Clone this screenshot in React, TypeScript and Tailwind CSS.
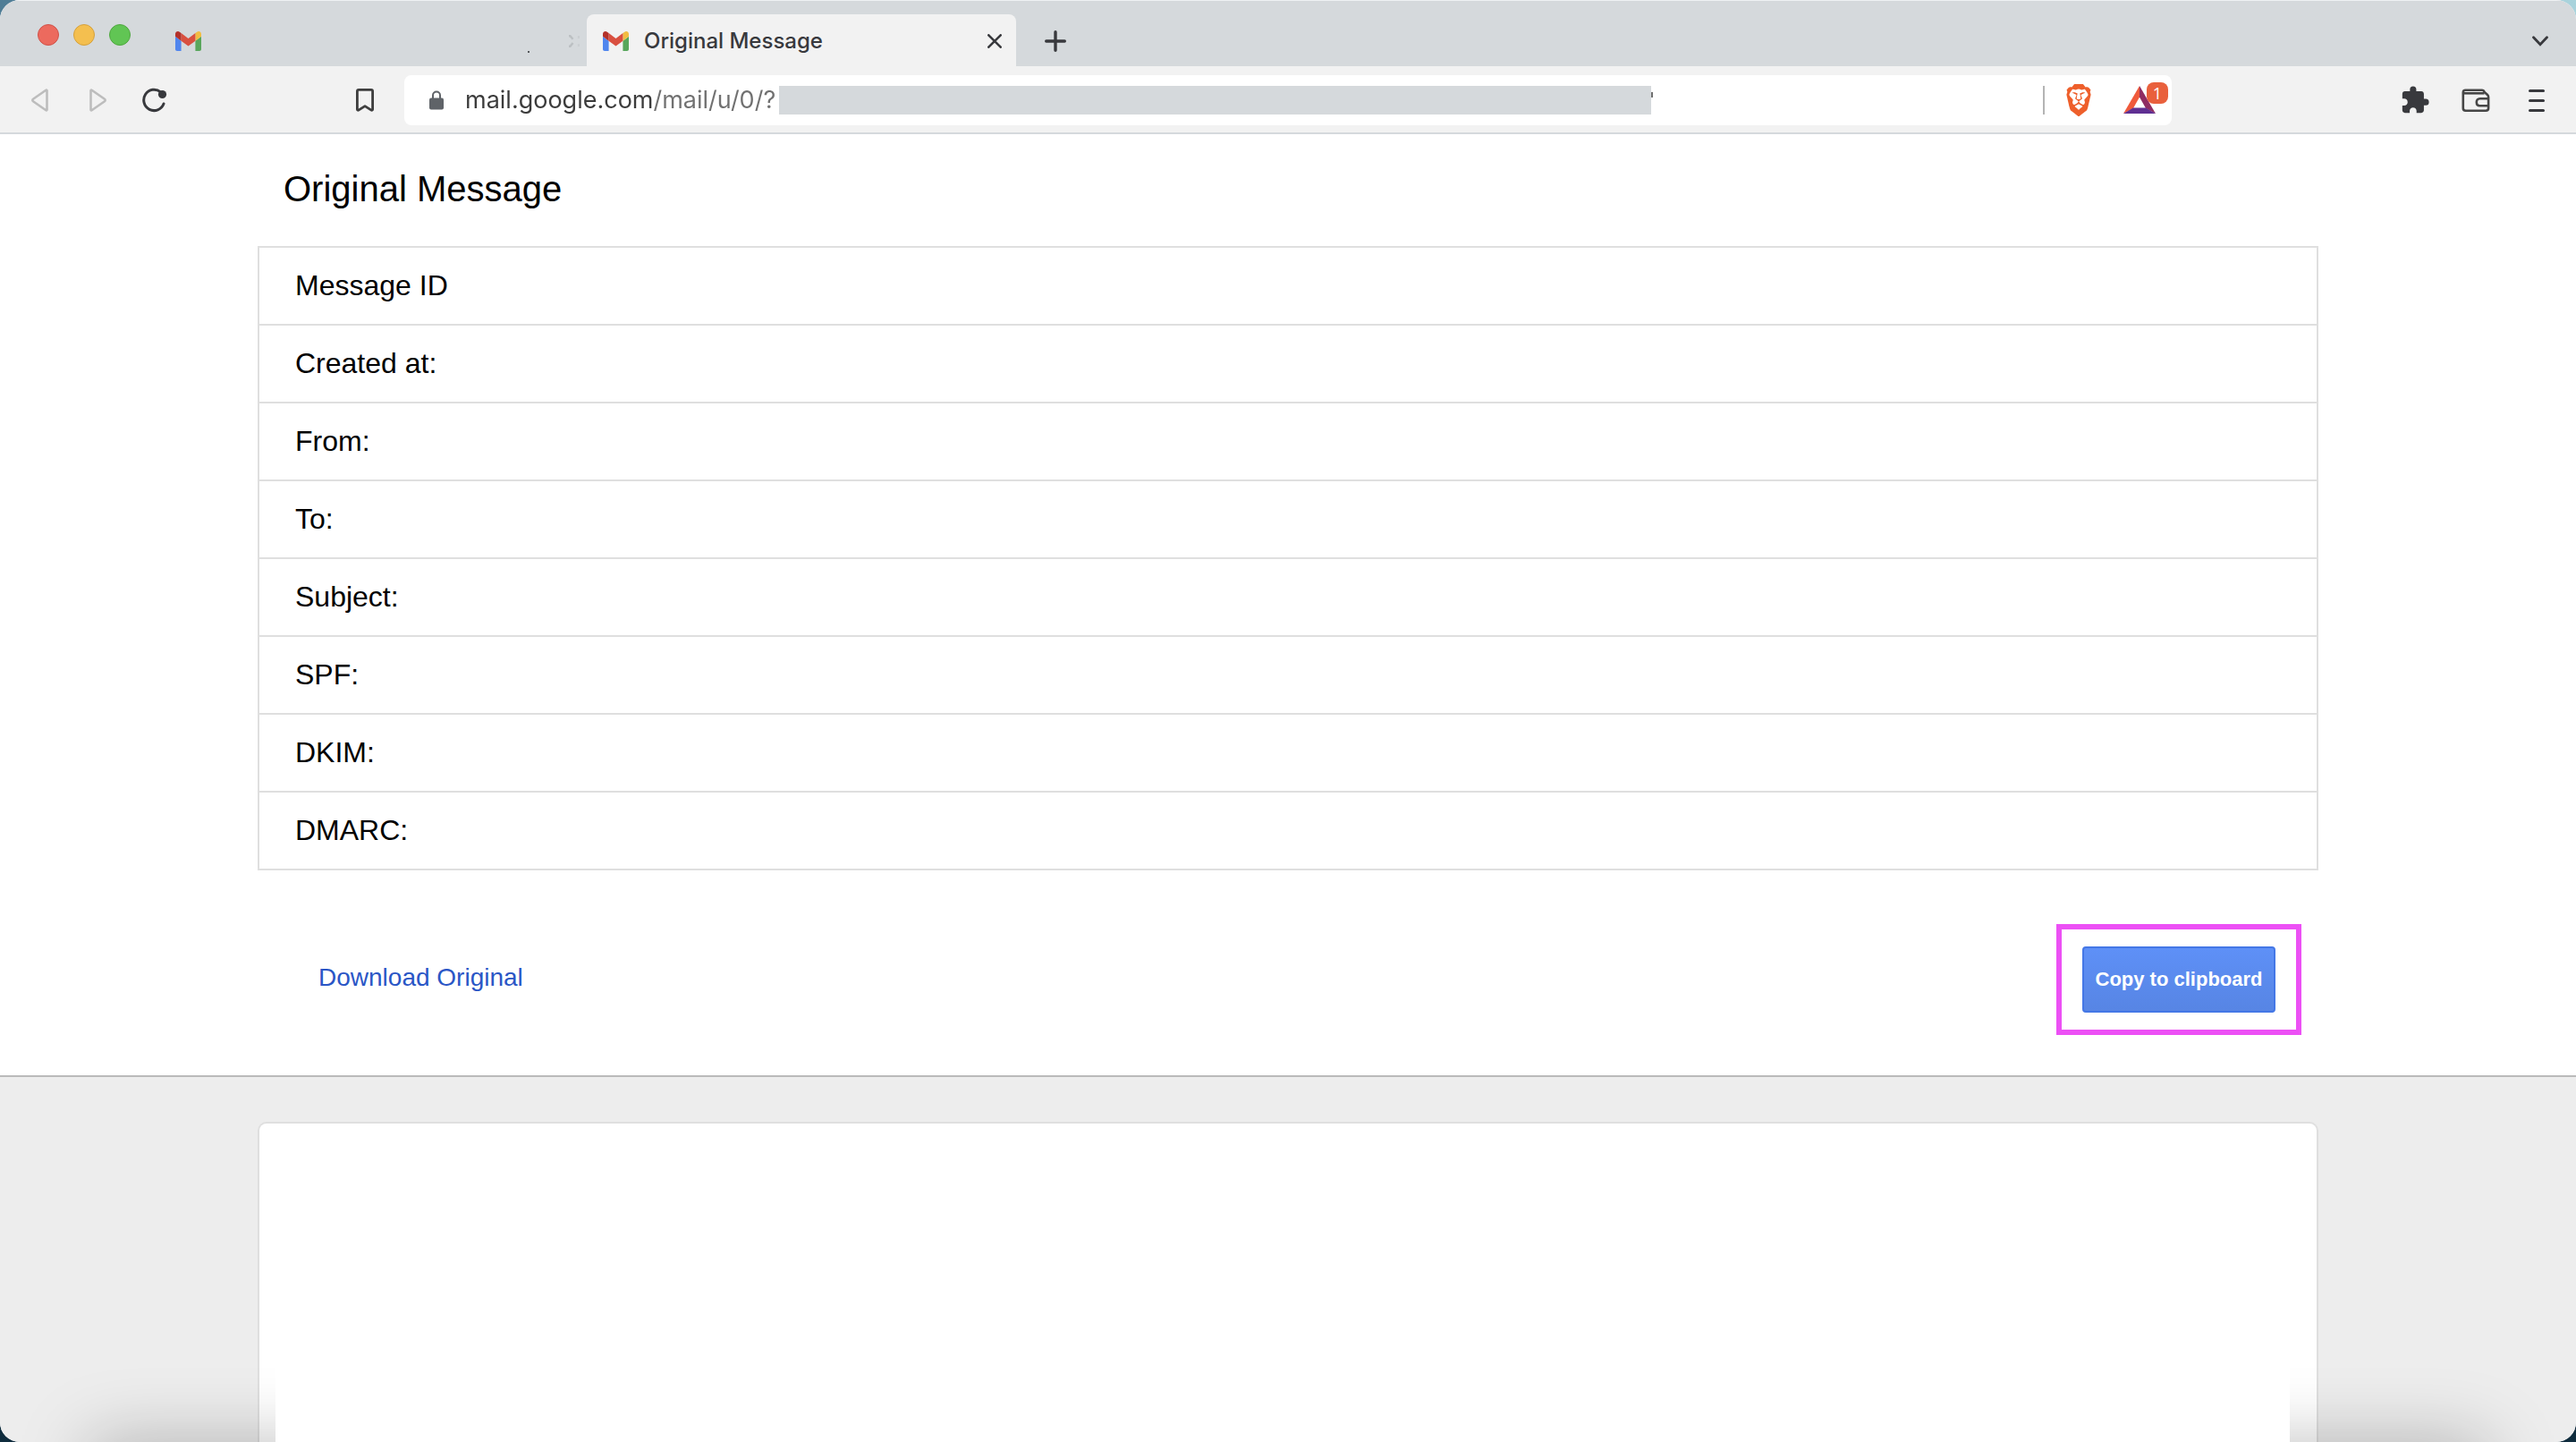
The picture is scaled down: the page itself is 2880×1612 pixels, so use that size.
import React, { useState } from 'react';
import { MdExtension } from 'react-icons/md';
import { SiBrave } from 'react-icons/si';

const fields = ['Message ID', 'Created at:', 'From:', 'To:', 'Subject:', 'SPF:', 'DKIM:', 'DMARC:'];

function GmailIcon() {
  return (
    <svg viewBox="52 42 88 66" className="h-[22px] w-[29px] shrink-0" aria-hidden="true">
      <path fill="#5086ee" d="M58 108h14V74L52 59v43c0 3.32 2.69 6 6 6" />
      <path fill="#58a65c" d="M120 108h14c3.32 0 6-2.69 6-6V59l-20 15" />
      <path fill="#f2bd42" d="M120 48v26l20-15v-8c0-7.42-8.47-11.65-14.4-7.2" />
      <path fill="#d95040" d="M72 74V48l24 18 24-18v26L96 92" />
      <path fill="#b3312a" d="M52 51v8l20 15V48l-5.6-4.2c-5.94-4.45-14.4-.22-14.4 7.2" />
    </svg>
  );
}

function BackIcon() {
  return (
    <svg viewBox="0 0 20 28" className="h-7 w-5" fill="none" stroke="#bdbdbd" strokeWidth="2.6" strokeLinejoin="round">
      <path d="M17.5 3.2v21.6c0 .6-.6.9-1.1.5L2 15.2c-.9-.6-.9-1.8 0-2.4L16.4 2.7c.5-.4 1.1-.1 1.1.5z" />
    </svg>
  );
}

function ReloadIcon() {
  return (
    <svg viewBox="0 0 28 28" className="h-7 w-7" fill="none">
      <path d="M20.5 4.8A11.5 11.7 0 1 0 24 18" stroke="#38393d" strokeWidth="3" strokeLinecap="round" />
      <circle cx="22.5" cy="7.5" r="4.6" fill="#38393d" />
    </svg>
  );
}

function BookmarkIcon() {
  return (
    <svg viewBox="0 0 20 28" className="h-7 w-5" fill="none" stroke="#3e3e3e" strokeWidth="2.8" strokeLinejoin="round">
      <path d="M3 2.4h14c.9 0 1.6.7 1.6 1.6v20.2c0 .8-.8 1.3-1.5.9L10 20.6l-7.1 4.5c-.7.4-1.500-.1-1.500-.9V4c0-.9.7-1.6 1.600-1.6z" />
    </svg>
  );
}

function LockIcon() {
  return (
    <svg viewBox="0 0 16 22" className="h-[22px] w-4 shrink-0">
      <path d="M4 10V5.5a4 4 0 0 1 8 0V10" fill="none" stroke="#5f6368" strokeWidth="2" />
      <rect x="0" y="8.5" width="16" height="13" rx="2" fill="#5f6368" />
    </svg>
  );
}

function RewardsIcon() {
  return (
    <svg viewBox="0 0 36 32" className="h-8 w-9">
      <path d="M18 0v12.5L11 25 0 31z" fill="#ef5a3c" />
      <path d="M18 0l18 31-11-6-7-12.5z" fill="#8f2c62" />
      <path d="M0 31l11-6.5h14L36 31z" fill="#5f2f92" />
    </svg>
  );
}

function WalletIcon() {
  return (
    <svg viewBox="0 0 32 28" className="h-7 w-8" fill="none" stroke="#464646" strokeWidth="2.6" strokeLinejoin="round">
      <path d="M1.8 5v18c0 1.7 1.2 2.7 2.8 2.7h22.600c1.800 0 2.900-1.100 2.900-2.700V10.500c0-1.200-.5-2.100-1.300-2.800l-3.200-2.800c-.5-1.600-1.200-2.200-2.800-2.200H4.400C2.900 2.700 1.800 3.500 1.800 5z" />
      <path d="M2 6.300h23.500" />
      <path d="M30 12.200H20.500c-2.300 0-3.700 1.700-3.700 4s1.400 4 3.700 4H30" />
    </svg>
  );
}

function TabStrip() {
  return (
    <div className="flex h-[74px] items-end border-t border-[#eef1f3] bg-[#d5d9dc] text-[#38393d]">
      <div className="flex h-[70px] items-center gap-4 pl-[42px]">
        <button type="button" aria-label="Close window" className="size-6 rounded-full border border-[#cf5249] bg-[#ec6a5e]" />
        <button type="button" aria-label="Minimize window" className="size-6 rounded-full border border-[#d4a03c] bg-[#f4bf4f]" />
        <button type="button" aria-label="Zoom window" className="size-6 rounded-full border border-[#4fa73f] bg-[#61c554]" />
      </div>

      <button type="button" aria-label="Gmail" className="flex h-[58px] w-[510px] items-center pt-[2px] pr-2 pl-[50px]">
        <GmailIcon />
        <span className="mt-6 ml-auto size-[2px] bg-[#55585b]" />
        {/* faded close button */}
        <svg viewBox="0 0 12 14" className="ml-11 h-[14px] w-3" fill="none" strokeWidth="2.4">
          <path d="M0 1.200h1.500l3 3.500M4.500 9l-3 3.800H0" stroke="#bcc0c3" />
          <path d="M11 1v3M11 10v3" stroke="#cbcfd2" />
        </svg>
      </button>

      <div className="flex h-[58px] w-[480px] items-center rounded-t-[8px] bg-[#f2f2f2] pt-[2px] pr-4 pl-[18px]">
        <GmailIcon />
        <span className="ml-[17px] font-['Inter',sans-serif] text-[24px] leading-8 font-medium whitespace-nowrap">
          Original Message
        </span>
        <button type="button" aria-label="Close tab" className="ml-auto">
          <svg viewBox="0 0 16 16" className="size-4" stroke="#38393d" strokeWidth="2.6" strokeLinecap="round">
            <path d="M1.3 1.3l13.4 13.4M14.7 1.3L1.3 14.7" />
          </svg>
        </button>
      </div>

      <div className="flex h-[58px] flex-1 items-center justify-between pt-[2px] pr-[31px] pl-8">
        <button type="button" aria-label="New tab">
          <svg viewBox="0 0 24 24" className="size-6" stroke="#38393d" strokeWidth="3.4" strokeLinecap="round">
            <path d="M12 1.7v20.6M1.7 12h20.6" />
          </svg>
        </button>
        <button type="button" aria-label="Search tabs">
          <svg viewBox="0 0 18 12" className="h-3 w-[18px]" fill="none" stroke="#38393d" strokeWidth="2.8" strokeLinecap="round">
            <path d="M1.5 1.8L9 9.8l7.5-8" />
          </svg>
        </button>
      </div>
    </div>
  );
}

function Toolbar() {
  const [url, setUrl] = useState('mail.google.com/mail/u/0/?');

  return (
    <div className="flex h-[76px] items-center border-b-2 border-[#d5d9dc] bg-[#f2f2f2] px-[35px] pt-[2px]">
      <button type="button" aria-label="Back">
        <BackIcon />
      </button>
      <button type="button" aria-label="Forward" className="ml-11 rotate-180">
        <BackIcon />
      </button>
      <button type="button" aria-label="Reload" className="ml-10">
        <ReloadIcon />
      </button>
      <button type="button" aria-label="Bookmark this page" className="ml-[211px]">
        <BookmarkIcon />
      </button>

      <div className="ml-[34px] flex h-14 flex-1 items-center rounded-[8px] bg-white pr-1 pl-7">
        <LockIcon />
        {/* host is dark, the path after it is dimmed */}
        <input
          type="text"
          aria-label="Address"
          value={url}
          onChange={(e) => setUrl(e.target.value)}
          className="ml-6 h-10 w-[351px] bg-[linear-gradient(to_right,#3b3b3b_209px,#707070_209px)] bg-clip-text font-['Inter',sans-serif] text-[27px] leading-10 text-transparent outline-none"
        />
        <span className="h-8 w-[975px] bg-[#d5d9dc]" />
        <span className="mb-3 h-[6px] w-[2px] bg-[#707070]" />
        <span className="ml-auto h-8 w-[2px] bg-[#b4b4b4]" />
        <button type="button" aria-label="Brave Shields" className="ml-[22px]">
          <SiBrave className="h-9 w-8 text-[#ee5f2b]" preserveAspectRatio="none" />
        </button>
        <button type="button" aria-label="Brave Rewards" className="relative mr-[14px] ml-[34px]">
          <RewardsIcon />
          <span className="absolute -top-1 left-[26px] flex size-6 items-center justify-center rounded-[8px] bg-[#e9603c] font-['Open_Sans',sans-serif] text-[18px] leading-6 text-white">
            1
          </span>
        </button>
      </div>

      <button type="button" aria-label="Extensions" className="ml-[255px]">
        <MdExtension className="size-[34px] text-[#38393d]" />
      </button>
      <button type="button" aria-label="Wallet" className="ml-[35px]">
        <WalletIcon />
      </button>
      <button type="button" aria-label="Menu" className="ml-[43px] flex flex-col gap-2">
        <span className="h-[3px] w-[18px] rounded-full bg-[#38393d]" />
        <span className="h-[3px] w-[18px] rounded-full bg-[#38393d]" />
        <span className="h-[3px] w-[18px] rounded-full bg-[#38393d]" />
      </button>
    </div>
  );
}

export default function App() {
  return (
    <div className="min-h-screen bg-[linear-gradient(to_bottom,transparent_50%,#0f2c3d_50%),linear-gradient(to_right,#4f7d96,#a9d3dc)]">
      <div className="relative flex min-h-screen flex-col overflow-hidden rounded-[22px] bg-white font-['Liberation_Sans',Arial,sans-serif] text-black">
        <TabStrip />
        <Toolbar />

        <main className="border-b-2 border-[#bababa] px-[10%] pt-[38px] pb-[45px]">
          <h1 className="pl-[29px] text-[40px] leading-[46px]">Original Message</h1>

          <table className="mt-[41px] w-full border-collapse border-2 border-[#dfdfdf]">
            <tbody>
              {fields.map((field) => (
                <tr key={field} className="h-[87px] border-b-2 border-[#dfdfdf]">
                  <th scope="row" className="pb-[2px] pl-10 text-left text-[32px] leading-9 font-normal">
                    {field}
                  </th>
                </tr>
              ))}
            </tbody>
          </table>

          <div className="mt-[60px] flex items-center justify-between pr-[19px] pl-[68px]">
            <a href="#download" className="pb-1 text-[28px] leading-8 text-[#2a56c6]">
              Download Original
            </a>
            <div className="border-[6px] border-[#ec50f5] px-[23px] py-[19px]">
              <button
                type="button"
                className="h-[74px] w-[216px] rounded-[4px] border-2 border-[#4477e6] bg-linear-to-b from-[#5e90f7] to-[#5785e4] text-[22px] leading-7 font-bold whitespace-nowrap text-white"
              >
                Copy to clipboard
              </button>
            </div>
          </div>
        </main>

        <section className="flex flex-1 flex-col bg-[#ededed] px-[10%] pt-[50px]">
          <div className="flex flex-1 flex-col rounded-t-[10px] border-2 border-b-0 border-[#dfdfdf] bg-white pr-[30px] pl-[18px]">
            <pre className="relative z-10 flex-1 bg-white" />
          </div>
        </section>

        <div className="absolute inset-x-[100px] -bottom-20 h-20 shadow-[0_0_80px_rgba(0,0,0,0.26)]" />
      </div>
    </div>
  );
}
